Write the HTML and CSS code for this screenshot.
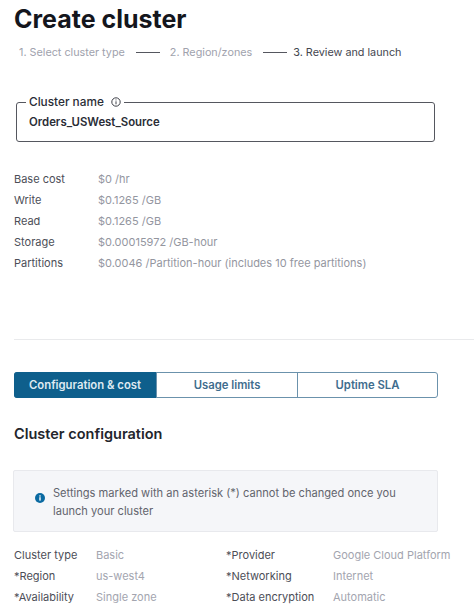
FILE: index.html
```html
<!DOCTYPE html>
<html lang="en">
<head>
<meta charset="utf-8">
<title>Create cluster</title>
<link rel="stylesheet" href="styles.css">
</head>
<body>
<main class="page">
  <h1 class="title">Create cluster</h1>
  <ol class="steps">
    <li class="step">1. Select cluster type</li>
    <li class="line line-a"></li>
    <li class="step">2. Region/zones</li>
    <li class="line line-b"></li>
    <li class="step step-current">3. Review and launch</li>
  </ol>
  <div class="field">
    <div class="field-label">
      <span>Cluster name</span>
      <svg class="info-outline" viewBox="0 0 10 10" width="10" height="10"><circle cx="5" cy="5" r="4.2" fill="none" stroke="#2a2d36" stroke-width="0.9"/><rect x="4.55" y="4.3" width="0.9" height="3" fill="#2a2d36"/><rect x="4.55" y="2.5" width="0.9" height="0.9" fill="#2a2d36"/></svg>
    </div>
    <div class="field-value">Orders_USWest_Source</div>
  </div>
  <dl class="costs">
    <dt>Base cost</dt><dd>$0 /hr</dd>
    <dt>Write</dt><dd>$0.1265 /GB</dd>
    <dt>Read</dt><dd>$0.1265 /GB</dd>
    <dt>Storage</dt><dd>$0.00015972 /GB-hour</dd>
    <dt>Partitions</dt><dd>$0.0046 /Partition-hour (includes 10 free partitions)</dd>
  </dl>
  <hr class="divider">
  <div class="tabs">
    <div class="tab tab-active">Configuration &amp; cost</div>
    <div class="tab">Usage limits</div>
    <div class="tab">Uptime SLA</div>
  </div>
  <h2 class="section-title">Cluster configuration</h2>
  <div class="notice">
    <svg class="info-solid" viewBox="0 0 10 10" width="10" height="10"><circle cx="5" cy="5" r="5" fill="#0b6aa2"/><rect x="4.3" y="4.2" width="1.4" height="3.4" fill="#fff"/><rect x="4.3" y="2.3" width="1.4" height="1.3" fill="#fff"/></svg>
    <p class="notice-text">Settings marked with an asterisk (*) cannot be changed once you launch your cluster</p>
  </div>
  <div class="config">
    <dl class="config-col config-left">
      <dt>Cluster type</dt><dd>Basic</dd>
      <dt>*Region</dt><dd>us-west4</dd>
      <dt>*Availability</dt><dd>Single zone</dd>
    </dl>
    <dl class="config-col config-right">
      <dt>*Provider</dt><dd>Google Cloud Platform</dd>
      <dt>*Networking</dt><dd>Internet</dd>
      <dt>*Data encryption</dt><dd>Automatic</dd>
    </dl>
  </div>
</main>
</body>
</html>
```
FILE: styles.css
```css
* { box-sizing: border-box; }
html, body { margin: 0; padding: 0; background: #fff; }
body { font-family: Inter, "Liberation Sans", sans-serif; color: #2a2d36; overflow: hidden; height: 614px; }
.page { padding-left: 14px; width: 474px; }
.title { margin: 0; padding-top: 3px; font-size: 25px; line-height: 32px; font-weight: 700; color: #14161d; }
.steps { list-style: none; margin: 0; padding: 8px 0 0 5px; display: flex; align-items: center; font-size: 10.8px; line-height: 18px; color: #a0a2ad; }
.step-current { color: #44464f; margin-top: 1px; }
.line { height: 1px; width: 24px; background: #55575f; }
.line-a { margin: 0 10px 0 11px; }
.line-b { margin: 0 6px 0 11px; }
.field { margin: 40px 0 0 2px; width: 419px; height: 40px; border: 1px solid #55575f; border-radius: 3px; position: relative; padding: 10px 0 0 12px; }
.field-label { position: absolute; top: -9px; left: 9px; padding: 0 3px; background: #fff; display: flex; align-items: center; gap: 7px; font-size: 11.8px; line-height: 16px; font-weight: 500; color: #2a2d36; }
.info-outline { display: block; }
.field-value { font-size: 11.4px; line-height: 18px; font-weight: 600; color: #2a2d36; }
.costs { margin: 27px 0 0; display: grid; grid-template-columns: 84px 1fr; grid-auto-rows: 21px; font-size: 11px; line-height: 21px; }
.costs dt { color: #4c4e57; }
.costs dd { margin: 0; color: #94969f; }
.divider { margin: 65px 0 0; border: 0; height: 1px; background: #e9eaec; }
.tabs { margin-top: 32px; width: 424px; height: 26px; display: grid; grid-template-columns: 141px 141px 1fr; border: 1px solid #6b92ac; border-radius: 3px; font-size: 11.3px; font-weight: 600; color: #3f6d8e; }
.tab { display: flex; align-items: center; justify-content: center; border-left: 1px solid #6b92ac; }
.tab:first-child { border-left: 0; }
.tab-active { background: #0e5f8c; color: #dfeaf1; margin: -1px 0 -1px -1px; border-radius: 3px 0 0 3px; }
.section-title { margin: 25px 0 0; font-size: 14.5px; line-height: 22px; font-weight: 600; color: #23252c; }
.notice { margin: 25px 0 0 -1px; width: 425px; height: 62px; background: #f5f6f9; border: 1px solid #e8e9ed; border-radius: 2px; display: flex; align-items: center; gap: 8px; padding-left: 21px; }
.info-solid { flex: none; margin-top: -7px; }
.notice-text { margin: 0; padding-top: 1px; width: 350px; font-size: 11.1px; line-height: 18px; color: #62646d; }
.config { display: flex; margin-top: 13px; font-size: 11px; line-height: 21px; }
.config-col { margin: 0; display: grid; grid-auto-rows: 21px; }
.config-col dt { color: #4c4e57; }
.config-col dd { margin: 0; color: #a3a5af; }
.config-left { grid-template-columns: 82px 130px; }
.config-right { grid-template-columns: 107px 1fr; white-space: nowrap; }
```
